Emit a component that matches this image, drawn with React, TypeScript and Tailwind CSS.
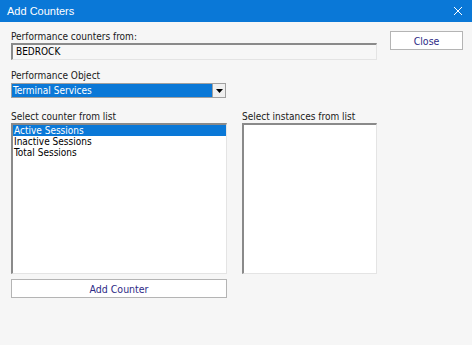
import React from "react";

const font = { fontFamily: '"DejaVu Sans Condensed", "DejaVu Sans", Tahoma, sans-serif' };
const titleFont = { fontFamily: '"Liberation Sans", Arial, sans-serif' };

export default function App() {
  return (
    <div className="w-[474px] h-[347px] bg-white" style={font}>
      <div className="w-[472px] h-[345px] bg-[#f6f6f6] flex flex-col">
        <div className="h-[22px] bg-[#0a78d7] flex items-center justify-between pl-[7px] pr-[9px] text-white text-[11px]" style={titleFont}>
          <span>Add Counters</span>
          <svg width="10" height="10" viewBox="0 0 10 10">
            <path d="M1 1 L9 9 M9 1 L1 9" stroke="white" strokeWidth="1" />
          </svg>
        </div>
        <div className="flex pl-[11px] pt-[8px] text-[10px] text-[#1a1a1a]">
          <div className="flex flex-col w-[366px]">
            <div className="leading-[13px] h-[13px]">Performance counters from:</div>
            <div className="h-[17px] w-[366px] border-t-2 border-l-2 border-t-[#8a8a8a] border-l-[#8a8a8a] border-r border-b border-r-[#e4e4e4] border-b-[#e4e4e4] bg-[#f7f7f7] pl-[3px] leading-[14px] text-black">
              BEDROCK
            </div>
            <div className="mt-[9px] leading-[13px] h-[13px]">Performance Object</div>
            <div className="mt-[1px] h-[15px] w-[215px] flex border border-[#a0a0a0] bg-[#0a78d7]">
              <div className="flex-1 text-white pl-[1px] leading-[13px]">Terminal Services</div>
              <div className="w-[13px] h-[13px] bg-[#f0f0f0] border-l border-[#a0a0a0] flex items-center justify-center">
                <svg width="7" height="4" viewBox="0 0 7 4"><path d="M0 0 H7 L3.5 4 Z" fill="#000" /></svg>
              </div>
            </div>
            <div className="flex mt-[12px]">
              <div className="flex flex-col w-[216px]">
                <div className="leading-[13px] h-[13px]">Select counter from list</div>
                <div className="h-[151px] border-t-2 border-l-2 border-t-[#8a8a8a] border-l-[#8a8a8a] border-r border-b border-r-[#e4e4e4] border-b-[#e4e4e4] bg-white text-black leading-[11px]">
                  <div className="bg-[#0a78d7] text-white pl-[1px]">Active Sessions</div>
                  <div className="pl-[1px]">Inactive Sessions</div>
                  <div className="pl-[1px]">Total Sessions</div>
                </div>
              </div>
              <div className="flex flex-col w-[135px] ml-[15px]">
                <div className="leading-[13px] h-[13px]">Select instances from list</div>
                <div className="h-[151px] border-t-2 border-l-2 border-t-[#8a8a8a] border-l-[#8a8a8a] border-r border-b border-r-[#e4e4e4] border-b-[#e4e4e4] bg-white" />
              </div>
            </div>
            <button className="mt-[5px] w-[216px] h-[19px] bg-white border border-[#b4b4b4] text-[#2e2a86] leading-[16px] text-[10.5px]">
              Add Counter
            </button>
          </div>
          <div className="ml-[13px] mt-[1px]">
            <button className="w-[73px] h-[19px] bg-white border border-[#b4b4b4] text-[#2e2a86] leading-[16px] text-[10.5px]">
              Close
            </button>
          </div>
        </div>
      </div>
    </div>
  );
}
